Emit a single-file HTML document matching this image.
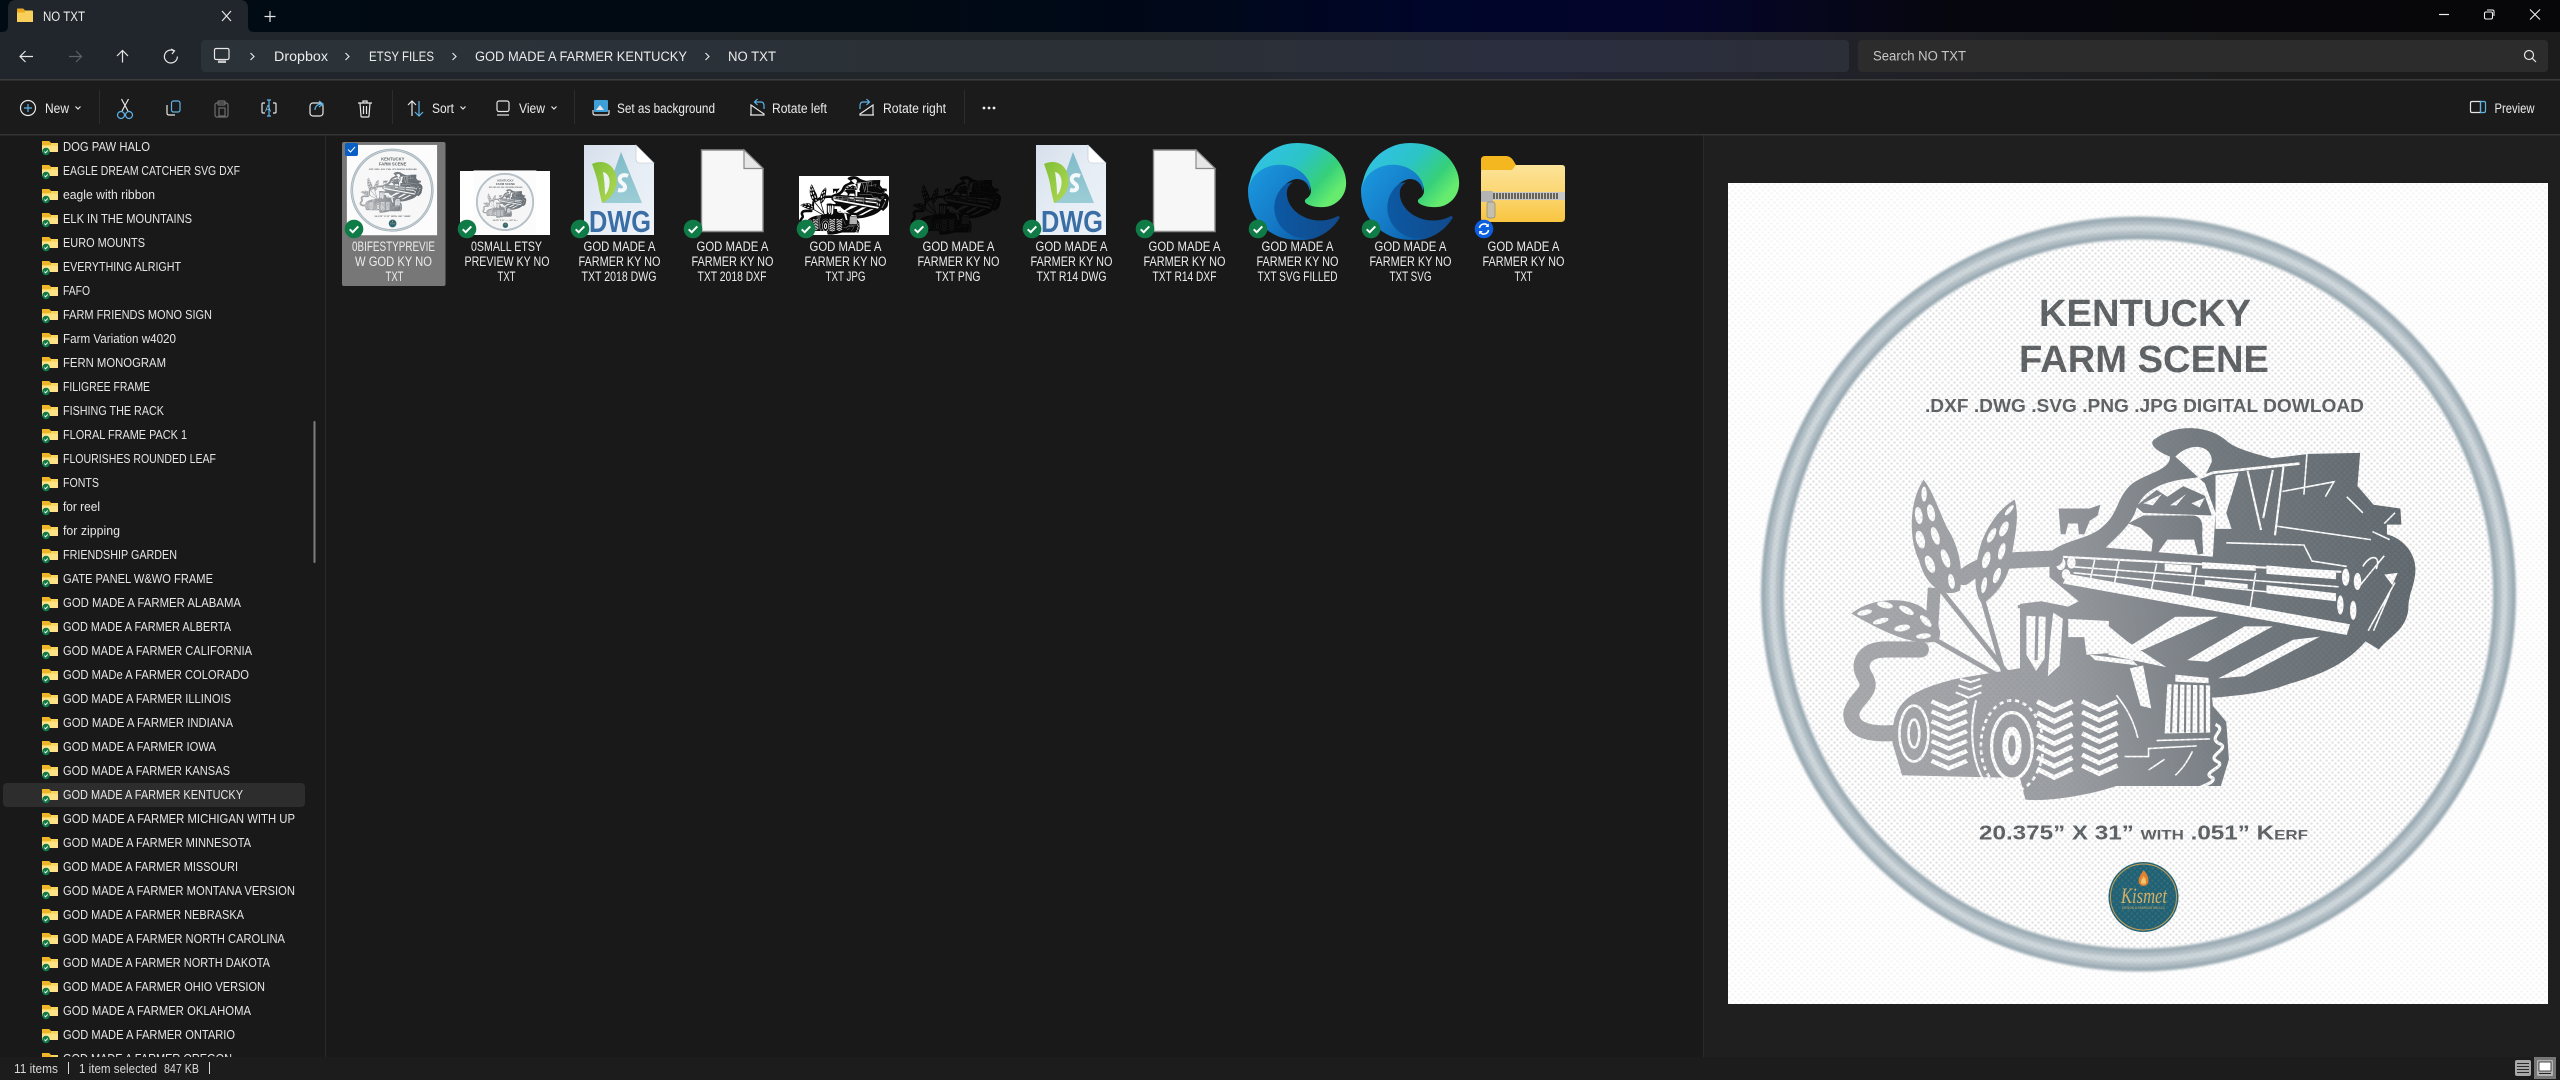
<!DOCTYPE html>
<html lang="en"><head><meta charset="utf-8"><title>NO TXT</title>
<style>
html,body{margin:0;padding:0;background:#191919;width:2560px;height:1080px;overflow:hidden}
svg{display:block}
text{font-family:"Liberation Sans",sans-serif;fill:#ececec;font-size:13.5px}
.s text{font-size:13px;fill:#e6e6e6}
.l text{font-size:13.5px;fill:#ececec;text-anchor:start}
.d{fill:var(--d)}.w{fill:var(--w)}
.ws{stroke:var(--w);fill:none}.ds{stroke:var(--d);fill:none}
.ic{fill:none;stroke:#e6e6e6;stroke-width:1.2}
.bl{fill:none;stroke:#5db2e6;stroke-width:1.2}
.pv text{font-weight:bold;fill:#5c6063}
</style></head><body>
<svg xmlns="http://www.w3.org/2000/svg" width="2560" height="1080" viewBox="0 0 2560 1080">
<defs>
<linearGradient id="tb" x1="0" x2="1" y1="0" y2="0"><stop offset="0" stop-color="#010b13"/><stop offset=".33" stop-color="#010a12"/><stop offset=".47" stop-color="#00081a"/><stop offset=".56" stop-color="#00052a"/><stop offset=".66" stop-color="#05052a"/><stop offset=".76" stop-color="#06060f"/><stop offset="1" stop-color="#070709"/></linearGradient>
<linearGradient id="ar" x1="0" x2="1" y1="0" y2="0"><stop offset="0" stop-color="#20262b"/><stop offset=".45" stop-color="#21262b"/><stop offset=".6" stop-color="#222536"/><stop offset=".72" stop-color="#212229"/><stop offset=".88" stop-color="#1c1c1c"/><stop offset="1" stop-color="#1c1c1c"/></linearGradient>
<linearGradient id="ab" x1="0" x2="1" y1="0" y2="0"><stop offset="0" stop-color="#2b3238"/><stop offset=".6" stop-color="#2b3037"/><stop offset=".82" stop-color="#2a2e3f"/><stop offset="1" stop-color="#2c2e38"/></linearGradient>
<linearGradient id="ag" gradientUnits="userSpaceOnUse" x1="230" y1="900" x2="1300" y2="750"><stop offset="0" stop-color="#a9aaae"/><stop offset=".35" stop-color="#9b9ea3"/><stop offset=".65" stop-color="#737a80"/><stop offset="1" stop-color="#5f686e"/></linearGradient>
<pattern id="dots" width="6" height="6" patternUnits="userSpaceOnUse"><circle cx="1.5" cy="1.5" r="1.25" fill="#8a8a8a" fill-opacity=".3"/><circle cx="4.5" cy="4.5" r="1.25" fill="#8a8a8a" fill-opacity=".3"/></pattern>
<filter id="soft" x="-5%" y="-5%" width="110%" height="110%"><feGaussianBlur stdDeviation="1"/></filter>
<linearGradient id="pg" x1="0" y1="0" x2="1" y2="1"><stop offset="0" stop-color="#d6dfeb"/><stop offset=".5" stop-color="#e6edf5"/><stop offset="1" stop-color="#eef2f8"/></linearGradient>
<linearGradient id="tg" x1="0" y1="0" x2="0" y2="1"><stop offset="0" stop-color="#7fbac8"/><stop offset="1" stop-color="#9ccdd6"/></linearGradient>
<linearGradient id="gg" x1="0" y1="0" x2="1" y2="1"><stop offset="0" stop-color="#7fbf36"/><stop offset="1" stop-color="#b2d955"/></linearGradient>
<linearGradient id="e1" x1="0" y1="0" x2="1" y2="0"><stop offset="0" stop-color="#0c59a4"/><stop offset="1" stop-color="#114a8b"/></linearGradient>
<linearGradient id="e2" x1="0" y1="0" x2="1" y2="1"><stop offset="0" stop-color="#1b9de2"/><stop offset=".6" stop-color="#1579c6"/><stop offset="1" stop-color="#0c5aa3"/></linearGradient>
<linearGradient id="e3" x1="0" y1="0" x2="1" y2=".6"><stop offset="0" stop-color="#35c1f1"/><stop offset=".5" stop-color="#2bc4c6"/><stop offset=".8" stop-color="#36d07a"/><stop offset="1" stop-color="#66eb6e"/></linearGradient>
<linearGradient id="zf" x1="0" y1="0" x2="0" y2="1"><stop offset="0" stop-color="#fce49a"/><stop offset=".6" stop-color="#fbd368"/><stop offset="1" stop-color="#f8c540"/></linearGradient>

<path id="chev" d="M0 0l32 16l34-16M0 21l32 16l34-16M0 42l32 16l34-16M0 63l32 16l34-16M0 84l32 16l34-16M0 105l32 16l34-16M0 126l32 16l34-16"/>

<g id="art">
 <!-- state silhouette and combine -->
 <path class="d" d="M615 715C640 690 690 690 715 665C745 640 740 610 770 585C800 565 840 560 840 535C815 525 795 510 815 500C850 475 910 475 945 505C960 520 1000 530 1030 538L1100 530L1195 528L1190 590L1220 625L1270 632L1272 662L1245 662L1245 680C1280 690 1300 720 1298 750C1296 780 1285 790 1285 820C1280 860 1250 870 1230 895L1205 880C1170 920 1130 940 1060 960C1020 975 980 980 920 985L760 880L615 760Z"/>
 <path class="w" d="M850 535C880 505 920 515 918 545L905 572L860 578C820 585 790 600 778 630C770 660 745 680 720 705L920 722L925 640L905 585Z"/>
 <path class="d" d="M776 628L815 597L835 610L865 590L905 608L918 645L790 640Z"/>
 <path class="w" d="M790 622L825 605L808 626ZM840 626L870 605L852 626ZM880 622L905 612L895 630Z"/>
 <path class="d" d="M762 660L790 645L880 645C900 645 902 660 900 680L902 716L892 718L885 690L835 690L815 718L805 716L808 690L785 668Z"/>
 <!-- small cow on white -->
 <path class="d" d="M632 632L690 632L710 625L705 645L690 655L680 680L670 680L668 660L650 660L645 680L636 680Z"/>
 <!-- cab -->
 <path class="w" d="M925 570L968 565L945 640L955 670L925 670Z"/>
 <path class="ws" stroke-width="5" d="M862 588L920 565L1082 548"/>
 <path class="ws" stroke-width="4" d="M985 562L1010 672M1032 560L1014 650M1052 552L1036 682"/>
 <path class="ws" stroke-width="3" d="M1096 525L1090 606M1050 600L1146 582L1130 610M1040 665L1215 690M945 696L1090 700L1105 730L1170 740M1170 610L1200 640M1218 675L1250 690M1240 660L1260 640"/>
 <!-- header -->
 <path class="w" d="M640 772L1170 868L1176 848L650 754Z"/>
 <path class="ws" stroke-width="4" d="M640 722L1160 750"/>
 <path class="ws" stroke-width="3" d="M650 740L1155 778M660 752L1150 800M700 725L690 770M745 730L735 778M815 735L805 785M890 742L880 800M1000 752L990 815"/>
 <path class="w" d="M1020 738L1150 750L1150 764L1020 754ZM1020 775L1150 790L1150 805L1020 790ZM900 732L1000 738L1000 748L900 744ZM905 765L985 773L985 782L905 775ZM830 735L880 738L880 752L830 748Z"/>
 <g class="w"><ellipse cx="636" cy="735" rx="9" ry="12"/><ellipse cx="656" cy="733" rx="8" ry="11"/><ellipse cx="646" cy="755" rx="8" ry="10"/><ellipse cx="1168" cy="760" rx="7" ry="16"/><ellipse cx="1190" cy="768" rx="7" ry="16"/><ellipse cx="1158" cy="812" rx="6" ry="18"/><ellipse cx="1182" cy="822" rx="6" ry="18"/></g>
 <path class="ws" stroke-width="3" d="M1200 740C1215 715 1235 720 1225 745M1195 775L1240 720M1210 860L1260 770M1220 860L1250 790"/>
 <path class="w" d="M1240 755L1265 752L1255 775Z"/>
 <!-- field stripes -->
 <path class="w" d="M754 896L850 834L930 834L789 896ZM872 915L979 852L1032 852L910 918ZM930 949L1070 877L1120 871L979 945Z"/>
 <!-- rivers -->
 <path class="ds" stroke-width="30" stroke-linecap="round" d="M455 760C500 722 560 730 625 725"/>
 <path class="ds" stroke-width="30" stroke-linecap="round" d="M375 895L310 895C270 895 255 920 270 945C290 975 250 985 245 1015C245 1050 290 1055 335 1050"/>
 <path class="ds" stroke-width="24" d="M400 780L395 860"/>
 <!-- stems -->
 <path class="ds" stroke-width="9" d="M405 775L545 950M490 800L530 940M390 870L530 950"/>
 <path class="d" d="M380 578C398 600 410 640 425 670C445 700 455 745 448 785C420 800 385 780 372 730C352 690 352 620 380 578Z"/>
 <path class="d" d="M550 615C560 650 550 680 545 720C540 760 520 790 490 810C470 790 475 730 490 690C505 655 525 630 550 615Z"/>
 <path class="d" d="M245 828C280 800 340 795 375 815C405 835 420 865 405 880C360 890 300 860 245 828Z"/>
 <g class="w">
  <ellipse cx="381" cy="605" rx="5" ry="14"/><ellipse cx="371" cy="645" rx="7" ry="16" transform="rotate(-8 371 645)"/><ellipse cx="394" cy="640" rx="7" ry="16" transform="rotate(-12 394 640)"/><ellipse cx="374" cy="690" rx="8" ry="17" transform="rotate(-15 374 690)"/><ellipse cx="402" cy="683" rx="7" ry="17" transform="rotate(-18 402 683)"/><ellipse cx="392" cy="736" rx="8" ry="17" transform="rotate(-22 392 736)"/><ellipse cx="421" cy="725" rx="7" ry="18" transform="rotate(-20 421 725)"/><ellipse cx="432" cy="768" rx="6" ry="14" transform="rotate(-10 432 768)"/>
  <ellipse cx="540" cy="635" rx="4" ry="12" transform="rotate(40 540 635)"/><ellipse cx="530" cy="670" rx="7" ry="15" transform="rotate(25 530 670)"/><ellipse cx="507" cy="682" rx="6" ry="15" transform="rotate(28 507 682)"/><ellipse cx="526" cy="712" rx="6" ry="16" transform="rotate(15 526 712)"/><ellipse cx="497" cy="728" rx="7" ry="16" transform="rotate(15 497 728)"/><ellipse cx="517" cy="757" rx="6" ry="15" transform="rotate(20 517 757)"/><ellipse cx="493" cy="775" rx="5" ry="15" transform="rotate(10 493 775)"/>
  <ellipse cx="270" cy="826" rx="14" ry="5" transform="rotate(-12 270 826)"/><ellipse cx="308" cy="812" rx="15" ry="6" transform="rotate(12 308 812)"/><ellipse cx="348" cy="822" rx="15" ry="6" transform="rotate(28 348 822)"/><ellipse cx="384" cy="842" rx="14" ry="6" transform="rotate(45 384 842)"/><ellipse cx="300" cy="842" rx="15" ry="5" transform="rotate(-15 300 842)"/><ellipse cx="340" cy="855" rx="15" ry="6" transform="rotate(-10 340 855)"/><ellipse cx="380" cy="870" rx="14" ry="5" transform="rotate(-5 380 870)"/>
 </g>
 <!-- tractor body & wheels -->
 <path class="d" d="M322 1070C320 1000 340 975 440 950L500 940L560 930L560 810L600 805L650 815L690 795L720 810L725 905L770 915L915 945L920 1000L945 1030L950 1100L935 1150L740 1150C680 1170 600 1180 570 1175L560 1135L340 1130Z"/>
 <path class="w" d="M572 832L608 834L606 912L590 935L572 905ZM622 826L640 838L634 925L612 945L616 880ZM650 838L726 842L724 902L684 905L680 872L650 872Z"/>
 <path class="ds" stroke-width="6" d="M556 815L650 818M592 830L590 915"/>
 <path class="w" d="M690 905L770 915L780 925L700 915ZM765 930L790 925L805 1005L785 1000ZM850 942L912 948L912 958L850 955Z"/>
 <path class="w" d="M835 960L915 962L915 1050L830 1052Z"/>
 <path class="ds" stroke-width="4" d="M845 960L842 1050M857 960L855 1050M869 960L868 1050M881 960L880 1050M893 960L893 1050M905 960L905 1050"/>
 <path class="ws" stroke-width="3" d="M815 1065L915 1062M755 1095L800 1095L800 1080L890 1075M740 980C755 1000 770 1020 780 1060M882 1085C870 1110 860 1120 850 1130M800 1120L830 1100"/>
 <g class="ws" stroke-width="9"><use href="#chev" transform="translate(395 992) scale(1 .88)"/><use href="#chev" transform="translate(592 992)"/><use href="#chev" transform="translate(676 992) scale(1 .95)"/></g>
 <path class="ws" stroke-width="4" d="M440 975l24 10l24-10M445 962l22 8l22-8M448 950l20 6l18-6M478 990C465 1040 470 1100 490 1135"/>
 <g class="ws"><ellipse stroke-width="5" cx="362" cy="1052" rx="27" ry="52"/><ellipse stroke-width="5" cx="362" cy="1052" rx="10" ry="26"/><ellipse stroke-width="6" cx="545" cy="1075" rx="38" ry="62"/><ellipse stroke-width="5" cx="545" cy="1075" rx="58" ry="85" stroke-dasharray="8 7"/></g>
 <ellipse class="w" cx="545" cy="1075" rx="18" ry="36"/>
 <ellipse class="d" cx="545" cy="1075" rx="7" ry="20"/>
 <path class="ws" stroke-width="6" d="M925 1035C950 1045 905 1060 935 1072C950 1082 905 1095 930 1105C945 1115 895 1125 920 1135C925 1145 895 1150 885 1160"/>
</g>

<g id="pv" class="pv">
 <rect x="1728" y="183" width="820" height="821" fill="#fff"/>
 <g transform="translate(1720 170) scale(.5357)" style="--d:url(#ag);--w:#fff"><use href="#art"/></g>
 <text x="2039" y="326" style="font-size:38px" textLength="212" lengthAdjust="spacingAndGlyphs">KENTUCKY</text>
 <text x="2019" y="372" style="font-size:38px" textLength="250" lengthAdjust="spacingAndGlyphs">FARM SCENE</text>
 <text x="1925" y="412" style="font-size:18.5px" textLength="439" lengthAdjust="spacingAndGlyphs">.DXF .DWG .SVG .PNG .JPG DIGITAL DOWLOAD</text>
 <text x="1979" y="839.500" style="font-size:20px;font-variant:small-caps" textLength="329" lengthAdjust="spacingAndGlyphs">20.375” X 31” with .051” Kerf</text>
 <circle cx="2143.500" cy="897" r="35" fill="#1f6275"/>
 <circle cx="2143.500" cy="897" r="33" fill="none" stroke="#c9a253" stroke-width="1"/>
 <path d="M2143.500 870c4 4 5 8 5 11a5 5 0 0 1-10 0c0-4 3-7 5-11z" fill="#e9812a"/>
 <path d="M2143.500 876c2 2 2.500 4 2.500 6a2.500 2.500 0 0 1-5 0c0-2 1.500-4 2.500-6z" fill="#f7c66b"/>
 <text x="2121" y="903" style="font-size:22px;font-family:'Liberation Serif',serif;font-style:italic;font-weight:normal;fill:#d9b262" textLength="46" lengthAdjust="spacingAndGlyphs">Kismet</text>
 <text x="2122" y="909" style="font-size:4px;font-weight:normal;fill:#d9b262" textLength="43" lengthAdjust="spacingAndGlyphs">DESIGN &amp; FABRICATION LLC</text>
 <g filter="url(#soft)">
  <circle cx="2138.500" cy="594" r="366" fill="none" stroke="#9dadb6" stroke-width="23"/>
  <circle cx="2138.500" cy="594" r="366" fill="none" stroke="#b4c0c7" stroke-width="14"/>
  <circle cx="2138.500" cy="594" r="366" fill="none" stroke="#cdd7db" stroke-width="6"/>
 </g>
 <rect x="1728" y="183" width="820" height="821" fill="url(#dots)" opacity=".3"/>
 <circle cx="2138.500" cy="594" r="354" fill="url(#dots)" opacity=".55"/>
</g>

<g id="dwg">
 <path d="M0 0H52L70 18V90H0Z" fill="url(#pg)"/>
 <path d="M52 0L70 18H56Q52 18 52 14Z" fill="#fff" stroke="#b9c5d3" stroke-width=".6"/>
 <path d="M37 7L58 58H19Z" fill="url(#tg)"/>
 <path d="M44 31c-7-3-11 3-6 7c5 3 4 9-4 7" fill="none" stroke="#f4fafc" stroke-width="4"/>
 <path d="M8 19C16 15 28 16 32 30C35 42 28 54 18 58L15 45C14 36 11 27 8 19Z" fill="url(#gg)"/>
 <path d="M19 27C24 28 27 34 25 42C24 46 23 48 21 50C21 42 20 33 19 27Z" fill="#eef3f7"/>
 <text x="5" y="87" style="font-size:31px;font-weight:bold;fill:#3a6ea5" textLength="62" lengthAdjust="spacingAndGlyphs">DWG</text>
</g>
<g id="blank">
 <path d="M.5 .5H43L62 19V82H.5Z" fill="#f7f7f7" stroke="#8a8a8a" stroke-width="1.400"/>
 <path d="M43 .5V19H62Z" fill="#e6e6e6" stroke="#8a8a8a" stroke-width="1.200"/>
</g>
<g id="edge" transform="scale(.375)">
 <path fill="url(#e1)" d="M235.680 195.460a93.730 93.730 0 0 1-10.540 4.710 101.870 101.870 0 0 1-35.900 6.460c-47.320 0-88.540-32.550-88.540-74.320A31.480 31.480 0 0 1 117.130 105c-42.800 1.800-53.800 46.400-53.800 72.530 0 73.880 68.090 81.370 82.760 81.370 7.910 0 19.840-2.300 27-4.560l1.310-.44a128.340 128.340 0 0 0 66.600-52.800 4 4 0 0 0-5.320-5.640z"/>
 <path fill="url(#e2)" d="M105.730 241.420A79.200 79.200 0 0 1 83 220.080a80.720 80.720 0 0 1 29.530-120c3.200-1.510 8.670-4.240 15.950-4.110a33.190 33.190 0 0 1 26.360 13.340 32.690 32.690 0 0 1 6.500 19.150c0-.21 25.100-81.680-82-81.680-45 0-82 42.700-82 80.170a133.430 133.430 0 0 0 12.410 57.400 128.380 128.380 0 0 0 156.850 67.300 75.790 75.790 0 0 1-61-10.230z"/>
 <path fill="url(#e3)" d="M152.330 148.800c-.83 1.070-3.380 2.550-3.380 5.790 0 2.680 1.750 5.250 4.850 7.420 14.830 10.310 42.780 8.920 42.850 8.920a61.420 61.420 0 0 0 31.220-8.610A63.180 63.180 0 0 0 259 108.200c.27-23.100-8.250-38.460-11.690-45.260C225.440 20.200 178.240 0 128 0A128 128 0 0 0 0 126.200c.48-37.660 37.930-68.080 82.480-68.080 3.610 0 24.200.35 43.330 10.390 16.860 8.850 25.690 19.540 31.830 30.140 6.380 11 7.510 24.900 7.510 30.440s-2.820 13.750-12.820 19.710z"/>
</g>
<g id="gb"><circle r="9.300" fill="#0f7b47"/><path d="M-4.300 .3L-1.300 3.200L4.300 -2.600" fill="none" stroke="#fff" stroke-width="2"/></g>
<g id="fi">
 <path d="M42 -6H49L51 -4H58V5H42Z" fill="#fbd65f"/>
 <path d="M42 -6H49L51 -4V-2H42Z" fill="#f0b429"/>
 <path d="M42 -1H58V5H42Z" fill="#fde28a"/>
 <circle cx="46" cy="4.500" r="3.800" fill="#0f7b47"/>
 <path d="M44.400 4.600L45.600 5.800L47.700 3.400" fill="none" stroke="#fff" stroke-width=".9"/>
</g>
</defs>

<!-- title bar -->
<rect width="2560" height="32" fill="url(#tb)"/>
<rect y="32" width="2560" height="47" fill="url(#ar)"/>
<rect y="79" width="2560" height="1.500" fill="#3c3c3c"/>
<rect y="80.500" width="2560" height="53.500" fill="#1b1b1b"/>
<rect y="134" width="2560" height="1.500" fill="#343434"/>
<rect y="135.500" width="2560" height="922" fill="#191919"/>
<rect x="1703" y="135.500" width="857" height="922" fill="#1f1f1f"/>
<rect x="325" y="135.500" width="1" height="922" fill="#2a2a2a"/>
<rect x="1703" y="135.500" width="1" height="922" fill="#2a2a2a"/>

<path d="M2 32Q8 32 8 26V8Q8 0 16 0H240Q248 0 248 8V26Q248 32 254 32Z" fill="#20262b"/>
<path d="M17 9.500Q17 8.500 18 8.500H23L25 10.500H32Q33 10.500 33 11.500V22H17Z" fill="#f9cf5c"/>
<path d="M17 9.500Q17 8.500 18 8.500H23L25 10.500V12.500H17Z" fill="#eba81f"/>
<text x="43" y="21" textLength="42" lengthAdjust="spacingAndGlyphs">NO TXT</text>
<path class="ic" d="M222 11L231 21M231 11L222 21"/>
<path class="ic" d="M270 11V22M264.500 16.500H275.500"/>
<!-- window controls -->
<path d="M2439 14.500H2449" stroke="#f0f0f0" stroke-width="1.200"/>
<rect x="2484.500" y="12" width="8" height="7" rx="1.500" fill="none" stroke="#f0f0f0" stroke-width="1.100"/>
<path d="M2487 10H2492.500Q2494 10 2494 11.500V16" fill="none" stroke="#f0f0f0" stroke-width="1"/>
<path d="M2530 9.500L2540 19.500M2540 9.500L2530 19.500" stroke="#f0f0f0" stroke-width="1.100"/>

<!-- nav -->
<path class="ic" d="M33 56.500H20M25.500 51L20 56.500L25.500 62"/>
<path class="ic" style="stroke:#5d6266" d="M69 56.500H81M76 51L81.500 56.500L76 62"/>
<path class="ic" d="M122.500 62.500V50.500M117 56L122.500 50.500L128 56"/>
<path class="ic" d="M174 50.800A6.500 6.500 0 1 0 177.400 56.500M171 49L174.500 50.800L172 54"/>
<rect x="201" y="40" width="1648" height="32" rx="4" fill="url(#ab)"/>
<rect x="1858" y="40" width="690" height="32" rx="4" fill="#2c2c2c"/>
<rect x="214.500" y="48.500" width="14.500" height="11" rx="1.500" class="ic"/>
<path d="M218 60.500H226V63H218Z" fill="#c8c8c8"/>
<g class="ic" stroke-width="1"><path d="M250.500 53L254 56.500L250.500 60M345.500 53L349 56.500L345.500 60M452.500 53L456 56.500L452.500 60M705.500 53L709 56.500L705.500 60"/></g>
<text x="274" y="61" textLength="54" lengthAdjust="spacingAndGlyphs">Dropbox</text>
<text x="369" y="61" textLength="65" lengthAdjust="spacingAndGlyphs">ETSY FILES</text>
<text x="475" y="61" textLength="212" lengthAdjust="spacingAndGlyphs">GOD MADE A FARMER KENTUCKY</text>
<text x="728" y="61" textLength="48" lengthAdjust="spacingAndGlyphs">NO TXT</text>
<text x="1873" y="60.500" textLength="93" lengthAdjust="spacingAndGlyphs" style="fill:#c8c8c8">Search NO TXT</text>
<circle cx="2529" cy="55" r="4.500" class="ic"/><path class="ic" d="M2532.300 58.300L2536 62"/>

<!-- toolbar -->
<circle cx="28" cy="108" r="7.500" class="ic"/><path class="bl" d="M28 104V112M24 108H32"/>
<text x="45" y="113" textLength="24" lengthAdjust="spacingAndGlyphs">New</text>
<path class="ic" d="M75.500 106.500L78 109L80.500 106.500" stroke-width="1"/>
<rect x="99" y="90" width="1" height="34" fill="#2c2c2c"/>
<path class="ic" d="M122 111L128.500 99M128 111L121.500 99"/><circle cx="121" cy="115" r="3.500" class="bl"/><circle cx="129" cy="115" r="3.500" class="bl"/>
<rect x="171.500" y="101" width="8.500" height="11" rx="2" class="bl"/><path class="ic" d="M167 105V113Q167 115 169 115H175"/>
<g style="opacity:.4"><rect x="215" y="103" width="13" height="14" rx="2" class="ic"/><rect x="218" y="101" width="7" height="4" rx="1" class="ic"/><rect x="219" y="108" width="6" height="8" class="ic"/></g>
<path class="ic" d="M265 103H263Q262 103 262 104V112Q262 113 263 113H265M273 103H275Q276 103 276 104V112Q276 113 275 113H273"/>
<path class="bl" d="M269 100V116M267 100H271M267 116H271"/><text x="265" y="111.500" style="font-size:9px;fill:#7ec0ea">A</text>
<rect x="310" y="103" width="13" height="13" rx="3" class="ic"/><path class="bl" d="M315 110C315 106 318 104 322 104M319 101L323 104L319 107" stroke-width="1.400"/>
<path class="ic" d="M358 103H372M360 103L361 116Q361 117 362 117H368Q369 117 369 116L370 103M363 103V101H367V103M363.500 106V114M366.500 106V114"/>
<rect x="392" y="90" width="1" height="34" fill="#2c2c2c"/>
<path class="ic" d="M412 116V101M408 105L412 101L416 105"/><path class="bl" d="M419 101V116M415 112L419 116L423 112"/>
<text x="432" y="113" textLength="22" lengthAdjust="spacingAndGlyphs">Sort</text>
<path class="ic" d="M460.500 106.500L463 109L465.500 106.500" stroke-width="1"/>
<rect x="497" y="101" width="12" height="10.500" rx="2" class="ic"/><path class="ic" d="M497 115H509"/>
<text x="519" y="113" textLength="26" lengthAdjust="spacingAndGlyphs">View</text>
<path class="ic" d="M551.500 106.500L554 109L556.500 106.500" stroke-width="1"/>
<rect x="574" y="90" width="1" height="34" fill="#2c2c2c"/>
<rect x="594" y="100" width="14" height="12" rx="1" fill="#3f9fd9"/><path d="M596 110L600 105L604 110Z" fill="#e8e8e8"/><path class="ic" d="M593 110V113Q593 115 595 115H607Q609 115 609 113V110"/>
<text x="617" y="113" textLength="98" lengthAdjust="spacingAndGlyphs">Set as background</text>
<path class="ic" d="M750 115H764V114L751 105V115"/><path class="bl" d="M755 102H761Q764 102 764 106V109M757.500 99L754.500 102L757.500 105"/>
<text x="772" y="113" textLength="55" lengthAdjust="spacingAndGlyphs">Rotate left</text>
<path class="ic" d="M874 115H860V114L873 105V115"/><path class="bl" d="M869 102H863Q860 102 860 106V109M866.500 99L869.500 102L866.500 105"/>
<text x="883" y="113" textLength="63" lengthAdjust="spacingAndGlyphs">Rotate right</text>
<rect x="964" y="90" width="1" height="34" fill="#2c2c2c"/>
<g fill="#eee"><circle cx="984" cy="108" r="1.400"/><circle cx="989" cy="108" r="1.400"/><circle cx="994" cy="108" r="1.400"/></g>
<path class="ic" d="M2480.500 101.500H2472Q2470.500 101.500 2470.500 103V111Q2470.500 112.500 2472 112.500H2480.500Z"/>
<path class="bl" d="M2480.500 101.500H2484Q2485.500 101.500 2485.500 103V111Q2485.500 112.500 2484 112.500H2480.500Z"/>
<text x="2494.500" y="113" textLength="40" lengthAdjust="spacingAndGlyphs">Preview</text>

<!-- sidebar -->
<rect x="3" y="783" width="302" height="24" rx="4" fill="#2d2d2d"/>
<rect x="313.500" y="421" width="2" height="142" rx="1" fill="#7d7d7d"/>
<g>
<use href="#fi" y="147"/><use href="#fi" y="171"/><use href="#fi" y="195"/><use href="#fi" y="219"/><use href="#fi" y="243"/><use href="#fi" y="267"/><use href="#fi" y="291"/><use href="#fi" y="315"/><use href="#fi" y="339"/><use href="#fi" y="363"/><use href="#fi" y="387"/><use href="#fi" y="411"/><use href="#fi" y="435"/><use href="#fi" y="459"/><use href="#fi" y="483"/><use href="#fi" y="507"/><use href="#fi" y="531"/><use href="#fi" y="555"/><use href="#fi" y="579"/><use href="#fi" y="603"/><use href="#fi" y="627"/><use href="#fi" y="651"/><use href="#fi" y="675"/><use href="#fi" y="699"/><use href="#fi" y="723"/><use href="#fi" y="747"/><use href="#fi" y="771"/><use href="#fi" y="795"/><use href="#fi" y="819"/><use href="#fi" y="843"/><use href="#fi" y="867"/><use href="#fi" y="891"/><use href="#fi" y="915"/><use href="#fi" y="939"/><use href="#fi" y="963"/><use href="#fi" y="987"/><use href="#fi" y="1011"/><use href="#fi" y="1035"/><use href="#fi" y="1059"/>
</g>
<g class="s" transform="translate(0 -.5)">
<text x="63" y="151.500" textLength="87" lengthAdjust="spacingAndGlyphs">DOG PAW HALO</text>
<text x="63" y="175.500" textLength="177" lengthAdjust="spacingAndGlyphs">EAGLE DREAM CATCHER SVG DXF</text>
<text x="63" y="199.500" textLength="92" lengthAdjust="spacingAndGlyphs">eagle with ribbon</text>
<text x="63" y="223.500" textLength="129" lengthAdjust="spacingAndGlyphs">ELK IN THE MOUNTAINS</text>
<text x="63" y="247.500" textLength="82" lengthAdjust="spacingAndGlyphs">EURO MOUNTS</text>
<text x="63" y="271.500" textLength="118" lengthAdjust="spacingAndGlyphs">EVERYTHING ALRIGHT</text>
<text x="63" y="295.500" textLength="27" lengthAdjust="spacingAndGlyphs">FAFO</text>
<text x="63" y="319.500" textLength="149" lengthAdjust="spacingAndGlyphs">FARM FRIENDS MONO SIGN</text>
<text x="63" y="343.500" textLength="113" lengthAdjust="spacingAndGlyphs">Farm Variation w4020</text>
<text x="63" y="367.500" textLength="103" lengthAdjust="spacingAndGlyphs">FERN MONOGRAM</text>
<text x="63" y="391.500" textLength="87" lengthAdjust="spacingAndGlyphs">FILIGREE FRAME</text>
<text x="63" y="415.500" textLength="101" lengthAdjust="spacingAndGlyphs">FISHING THE RACK</text>
<text x="63" y="439.500" textLength="124" lengthAdjust="spacingAndGlyphs">FLORAL FRAME PACK 1</text>
<text x="63" y="463.500" textLength="153" lengthAdjust="spacingAndGlyphs">FLOURISHES ROUNDED LEAF</text>
<text x="63" y="487.500" textLength="36" lengthAdjust="spacingAndGlyphs">FONTS</text>
<text x="63" y="511.500" textLength="37" lengthAdjust="spacingAndGlyphs">for reel</text>
<text x="63" y="535.500" textLength="57" lengthAdjust="spacingAndGlyphs">for zipping</text>
<text x="63" y="559.500" textLength="114" lengthAdjust="spacingAndGlyphs">FRIENDSHIP GARDEN</text>
<text x="63" y="583.500" textLength="150" lengthAdjust="spacingAndGlyphs">GATE PANEL W&amp;WO FRAME</text>
<text x="63" y="607.500" textLength="178" lengthAdjust="spacingAndGlyphs">GOD MADE A FARMER ALABAMA</text>
<text x="63" y="631.500" textLength="168" lengthAdjust="spacingAndGlyphs">GOD MADE A FARMER ALBERTA</text>
<text x="63" y="655.500" textLength="189" lengthAdjust="spacingAndGlyphs">GOD MADE A FARMER CALIFORNIA</text>
<text x="63" y="679.500" textLength="186" lengthAdjust="spacingAndGlyphs">GOD MADe A FARMER COLORADO</text>
<text x="63" y="703.500" textLength="168" lengthAdjust="spacingAndGlyphs">GOD MADE A FARMER ILLINOIS</text>
<text x="63" y="727.500" textLength="170" lengthAdjust="spacingAndGlyphs">GOD MADE A FARMER INDIANA</text>
<text x="63" y="751.500" textLength="153" lengthAdjust="spacingAndGlyphs">GOD MADE A FARMER IOWA</text>
<text x="63" y="775.500" textLength="167" lengthAdjust="spacingAndGlyphs">GOD MADE A FARMER KANSAS</text>
<text x="63" y="799.500" textLength="180" lengthAdjust="spacingAndGlyphs">GOD MADE A FARMER KENTUCKY</text>
<text x="63" y="823.500" textLength="232" lengthAdjust="spacingAndGlyphs">GOD MADE A FARMER MICHIGAN WITH UP</text>
<text x="63" y="847.500" textLength="188" lengthAdjust="spacingAndGlyphs">GOD MADE A FARMER MINNESOTA</text>
<text x="63" y="871.500" textLength="175" lengthAdjust="spacingAndGlyphs">GOD MADE A FARMER MISSOURI</text>
<text x="63" y="895.500" textLength="232" lengthAdjust="spacingAndGlyphs">GOD MADE A FARMER MONTANA VERSION</text>
<text x="63" y="919.500" textLength="181" lengthAdjust="spacingAndGlyphs">GOD MADE A FARMER NEBRASKA</text>
<text x="63" y="943.500" textLength="222" lengthAdjust="spacingAndGlyphs">GOD MADE A FARMER NORTH CAROLINA</text>
<text x="63" y="967.500" textLength="207" lengthAdjust="spacingAndGlyphs">GOD MADE A FARMER NORTH DAKOTA</text>
<text x="63" y="991.500" textLength="202" lengthAdjust="spacingAndGlyphs">GOD MADE A FARMER OHIO VERSION</text>
<text x="63" y="1015.500" textLength="188" lengthAdjust="spacingAndGlyphs">GOD MADE A FARMER OKLAHOMA</text>
<text x="63" y="1039.500" textLength="172" lengthAdjust="spacingAndGlyphs">GOD MADE A FARMER ONTARIO</text>
<text x="63" y="1063.500" textLength="169" lengthAdjust="spacingAndGlyphs">GOD MADE A FARMER OREGON</text>
</g>

<!-- file grid -->
<rect x="342" y="142" width="103.500" height="144" rx="2" fill="#777"/>
<use href="#pv" transform="translate(156.800 124.800) scale(.11)"/>
<rect x="460" y="171" width="90" height="64" fill="#fff"/>
<use href="#pv" transform="translate(341 156.400) scale(.0767)"/>
<use href="#dwg" x="584" y="145"/>
<use href="#blank" x="701" y="149.500"/>
<rect x="799" y="176" width="90" height="59" fill="#fff"/>
<g transform="translate(779.600 135.500) scale(.0843)" style="--d:#0a0a0a;--w:#fff"><use href="#art"/></g>
<g transform="translate(891.600 135.500) scale(.0843)" style="--d:#060606;--w:#191919"><use href="#art"/></g>
<use href="#dwg" x="1036" y="145"/>
<use href="#blank" x="1153" y="149.500"/>
<use href="#edge" transform="translate(1249 143)"/>
<use href="#edge" transform="translate(1362 143)"/>
<!-- zip folder -->
<path d="M1481 160Q1481 156 1485 156H1506Q1510 156 1513 160L1516 165H1481Z" fill="#f5b71f"/>
<path d="M1481 172Q1481 165 1488 165H1562Q1565 165 1565 168V218Q1565 222 1561 222H1485Q1481 222 1481 218Z" fill="url(#zf)"/>
<path d="M1481 165H1516L1512 170H1481Z" fill="#f5b71f"/>
<rect x="1481" y="192" width="84" height="8" fill="#c8c8c8"/>
<path d="M1494 193V199M1497 193V199M1500 193V199M1503 193V199M1506 193V199M1509 193V199M1512 193V199M1515 193V199M1518 193V199M1521 193V199M1524 193V199M1527 193V199M1530 193V199M1533 193V199M1536 193V199M1539 193V199M1542 193V199M1545 193V199M1548 193V199M1551 193V199M1554 193V199M1557 193V199" stroke="#4f4a3a" stroke-width="1.600"/>
<rect x="1481" y="191" width="12" height="11" rx="1.500" fill="#b4b4b4"/><rect x="1487" y="202" width="8" height="16" rx="2" fill="#c5c0ad" stroke="#8a8778" stroke-width=".7"/>
<!-- badges -->
<use href="#gb" x="354" y="229"/><use href="#gb" x="467" y="229"/><use href="#gb" x="580" y="229"/><use href="#gb" x="693" y="229"/><use href="#gb" x="806" y="229"/><use href="#gb" x="919" y="229"/><use href="#gb" x="1032" y="229"/><use href="#gb" x="1145" y="229"/><use href="#gb" x="1258" y="229"/><use href="#gb" x="1371" y="229"/>
<circle cx="1484" cy="229" r="9.300" fill="#0b5fe0"/>
<path d="M1479.500 228A4.700 4.700 0 0 1 1488 226M1488.500 230A4.700 4.700 0 0 1 1480 232" fill="none" stroke="#fff" stroke-width="1.600"/>
<path d="M1488.800 223.500V227H1485.300ZM1479.200 234.500V231H1482.700Z" fill="#fff"/>
<rect x="345" y="143" width="13" height="13" rx="2" fill="#0a5fc4"/><path d="M348 149.500L350.500 152L355 147" fill="none" stroke="#fff" stroke-width="1"/>
<!-- labels -->
<g class="l">
<text x="352" y="251" textLength="83" lengthAdjust="spacingAndGlyphs">0BIFESTYPREVIE</text>
<text x="355" y="266" textLength="77" lengthAdjust="spacingAndGlyphs">W GOD KY NO</text>
<text x="385.500" y="281" textLength="18" lengthAdjust="spacingAndGlyphs">TXT</text>
<text x="471" y="251" textLength="71" lengthAdjust="spacingAndGlyphs">0SMALL ETSY</text>
<text x="464.500" y="266" textLength="85" lengthAdjust="spacingAndGlyphs">PREVIEW KY NO</text>
<text x="497.500" y="281" textLength="18" lengthAdjust="spacingAndGlyphs">TXT</text>
<text x="583.500" y="251" textLength="72" lengthAdjust="spacingAndGlyphs">GOD MADE A</text>
<text x="578.500" y="266" textLength="82" lengthAdjust="spacingAndGlyphs">FARMER KY NO</text>
<text x="581.500" y="281" textLength="75" lengthAdjust="spacingAndGlyphs">TXT 2018 DWG</text>
<text x="696.500" y="251" textLength="72" lengthAdjust="spacingAndGlyphs">GOD MADE A</text>
<text x="691.500" y="266" textLength="82" lengthAdjust="spacingAndGlyphs">FARMER KY NO</text>
<text x="697.500" y="281" textLength="69" lengthAdjust="spacingAndGlyphs">TXT 2018 DXF</text>
<text x="809.500" y="251" textLength="72" lengthAdjust="spacingAndGlyphs">GOD MADE A</text>
<text x="804.500" y="266" textLength="82" lengthAdjust="spacingAndGlyphs">FARMER KY NO</text>
<text x="825.500" y="281" textLength="40" lengthAdjust="spacingAndGlyphs">TXT JPG</text>
<text x="922.500" y="251" textLength="72" lengthAdjust="spacingAndGlyphs">GOD MADE A</text>
<text x="917.500" y="266" textLength="82" lengthAdjust="spacingAndGlyphs">FARMER KY NO</text>
<text x="935.500" y="281" textLength="45" lengthAdjust="spacingAndGlyphs">TXT PNG</text>
<text x="1035.500" y="251" textLength="72" lengthAdjust="spacingAndGlyphs">GOD MADE A</text>
<text x="1030.500" y="266" textLength="82" lengthAdjust="spacingAndGlyphs">FARMER KY NO</text>
<text x="1036.500" y="281" textLength="70" lengthAdjust="spacingAndGlyphs">TXT R14 DWG</text>
<text x="1148.500" y="251" textLength="72" lengthAdjust="spacingAndGlyphs">GOD MADE A</text>
<text x="1143.500" y="266" textLength="82" lengthAdjust="spacingAndGlyphs">FARMER KY NO</text>
<text x="1152.500" y="281" textLength="64" lengthAdjust="spacingAndGlyphs">TXT R14 DXF</text>
<text x="1261.500" y="251" textLength="72" lengthAdjust="spacingAndGlyphs">GOD MADE A</text>
<text x="1256.500" y="266" textLength="82" lengthAdjust="spacingAndGlyphs">FARMER KY NO</text>
<text x="1257.500" y="281" textLength="80" lengthAdjust="spacingAndGlyphs">TXT SVG FILLED</text>
<text x="1374.500" y="251" textLength="72" lengthAdjust="spacingAndGlyphs">GOD MADE A</text>
<text x="1369.500" y="266" textLength="82" lengthAdjust="spacingAndGlyphs">FARMER KY NO</text>
<text x="1389.500" y="281" textLength="42" lengthAdjust="spacingAndGlyphs">TXT SVG</text>
<text x="1487.500" y="251" textLength="72" lengthAdjust="spacingAndGlyphs">GOD MADE A</text>
<text x="1482.500" y="266" textLength="82" lengthAdjust="spacingAndGlyphs">FARMER KY NO</text>
<text x="1514.500" y="281" textLength="18" lengthAdjust="spacingAndGlyphs">TXT</text>
</g>

<!-- preview -->
<use href="#pv"/>

<!-- status bar -->
<rect y="1057" width="2560" height="23" fill="#1c1c1c"/>
<text x="14" y="1073" style="font-size:13px;fill:#d8d8d8" textLength="44" lengthAdjust="spacingAndGlyphs">11 items</text>
<rect x="68" y="1062" width="1" height="12" fill="#d8d8d8"/>
<text x="79" y="1073" style="font-size:13px;fill:#d8d8d8" textLength="78" lengthAdjust="spacingAndGlyphs">1 item selected</text>
<text x="164" y="1073" style="font-size:13px;fill:#d8d8d8" textLength="35" lengthAdjust="spacingAndGlyphs">847 KB</text>
<rect x="209" y="1062" width="1" height="12" fill="#d8d8d8"/>
<rect x="2515" y="1060" width="16" height="16" rx="2" fill="#a8a8a8"/>
<path d="M2517 1063.500H2529M2517 1066.500H2529M2517 1069.500H2529M2517 1072.500H2529" stroke="#2a2a2a" stroke-width="1"/>
<rect x="2534" y="1057" width="22" height="22" fill="#777"/>
<rect x="2537" y="1060" width="16" height="16" rx="1.500" fill="#b5b5b5"/>
<rect x="2539" y="1062" width="12" height="9" fill="#fff" stroke="#222" stroke-width=".8"/>
<path d="M2539 1073.500H2551" stroke="#222" stroke-width="1"/>
</svg>
</body></html>
